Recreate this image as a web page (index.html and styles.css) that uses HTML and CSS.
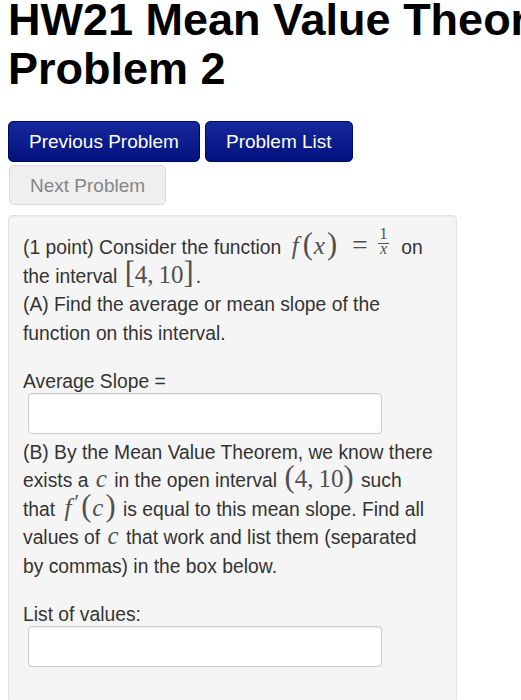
FILE: index.html
```html
<!DOCTYPE html>
<html lang="en">
<head>
<meta charset="utf-8">
<title>HW21 Mean Value Theorem Problem 2</title>
<link rel="stylesheet" href="styles.css">
</head>
<body>
<div class="page">
  <h1 class="title"><span class="title-line">HW21 Mean Value Theorem</span><span class="title-line">Problem 2</span></h1>

  <div class="nav">
    <div class="nav-row">
      <a class="btn btn-primary" href="#">Previous Problem</a>
      <a class="btn btn-primary" href="#">Problem List</a>
    </div>
    <div class="nav-row">
      <span class="btn btn-disabled">Next Problem</span>
    </div>
  </div>

  <div class="well">
    <p class="para">(1 point) Consider the function <span class="math"><span class="mi fn">f</span><span class="delim">(</span><span class="mi var">x</span><span class="delim">)</span><span class="mo">=</span><span class="frac"><span class="num">1</span><span class="den"><span class="mi">x</span></span></span></span> on<br>the interval <span class="math"><span class="delim">[</span>4<span class="comma">,</span>10<span class="delim">]</span></span>.<br>(A) Find the average or mean slope of the<br>function on this interval.</p>

    <p class="label">Average Slope =</p>
    <div class="answer"></div>

    <p class="para">(B) By the Mean Value Theorem, we know there<br>exists a <span class="math"><span class="mi">c</span></span> in the open interval <span class="math"><span class="delim">(</span>4<span class="comma">,</span>10<span class="delim">)</span></span> such<br>that <span class="math"><span class="mi fn-p">f</span><span class="prime">′</span><span class="delim">(</span><span class="mi var">c</span><span class="delim">)</span></span> is equal to this mean slope. Find all<br>values of <span class="math"><span class="mi">c</span></span> that work and list them (separated<br>by commas) in the box below.</p>

    <p class="label">List of values:</p>
    <div class="answer"></div>
  </div>
</div>
</body>
</html>
```

FILE: styles.css
```css
html, body {
  margin: 0;
  padding: 0;
  background: #ffffff;
  overflow: hidden;
}

.page {
  padding: 0 8px;
  font-family: "Liberation Sans", Arial, Helvetica, sans-serif;
  color: #333333;
}

.title {
  margin: -5px 0 0 0;
  font-size: 45px;
  line-height: 49px;
  font-weight: bold;
  color: #000000;
  white-space: nowrap;
}

.title-line {
  display: block;
}

.nav {
  margin-top: 28px;
  display: flex;
  flex-direction: column;
  row-gap: 3px;
}

.nav-row {
  display: flex;
  column-gap: 5px;
}

.btn {
  display: inline-block;
  box-sizing: border-box;
  height: 41px;
  padding: 9px 20px;
  font-size: 19px;
  line-height: 21px;
  border-radius: 5px;
  border: 1px solid transparent;
  text-decoration: none;
  white-space: nowrap;
}

.btn-primary {
  color: #ffffff;
  background: linear-gradient(to bottom, #15289c 0%, #04127f 100%);
  border-color: #00095e;
}

.btn-disabled {
  color: #868686;
  background: #efefef;
  border-color: #d8d8d8;
  height: 40px;
  margin-left: 1px;
}

.well {
  margin-top: 10px;
  width: 449px;
  box-sizing: border-box;
  min-height: 485px;
  padding: 12px 14px 30px 14px;
  background: #f5f5f5;
  border: 1px solid #e3e3e3;
  border-radius: 4px;
  box-shadow: inset 0 1px 1px rgba(0, 0, 0, 0.05);
  font-size: 19.3px;
  line-height: 28.5px;
  white-space: nowrap;
}

.para {
  margin: 0 0 20px 0;
}

.label {
  margin: 0;
}

.answer {
  box-sizing: border-box;
  width: 354px;
  height: 41px;
  margin: -4px 0 5px 5px;
  background: #ffffff;
  border: 1px solid #cccccc;
  border-radius: 4px;
  box-shadow: inset 0 1px 1px rgba(0, 0, 0, 0.075);
}

.math {
  font-family: "Liberation Serif", "DejaVu Serif", serif;
  font-size: 25px;
  color: #505050;
  line-height: 0;
  padding: 0 2px;
}

.mi {
  font-style: italic;
}

.fn {
  margin: 0 4px 0 3px;
}

.fn-p {
  margin-left: 2px;
}

.var {
  margin: 0 2px 0 1px;
}

.delim {
  font-size: 1.22em;
  font-weight: 300;
}

.mo {
  margin: 0 10px 0 15px;
  font-size: 1.12em;
}

.comma {
  margin-right: 5px;
}

.prime {
  font-size: 0.85em;
  vertical-align: 7px;
  margin: 0 2px 0 3px;
}

.frac {
  display: inline-block;
  text-align: center;
  font-size: 16px;
  padding: 0 5px 0 0;
  vertical-align: baseline;
}

.num {
  display: block;
  line-height: 11px;
  padding-bottom: 4px;
}

.den {
  display: block;
  line-height: 10px;
  border-top: 1px solid #505050;
  padding: 0 2px;
}
```
